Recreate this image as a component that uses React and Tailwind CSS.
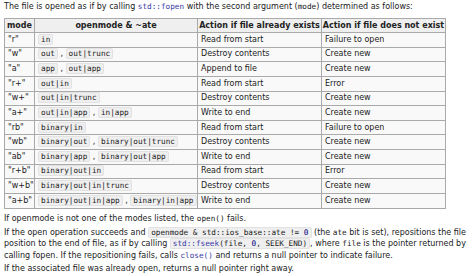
const rows = [
  ['"r"', [['in']], 'Read from start', 'Failure to open'],
  ['"w"', [['out'], ['out|trunc']], 'Destroy contents', 'Create new'],
  ['"a"', [['app'], ['out|app']], 'Append to file', 'Create new'],
  ['"r+"', [['out|in']], 'Read from start', 'Error'],
  ['"w+"', [['out|in|trunc']], 'Destroy contents', 'Create new'],
  ['"a+"', [['out|in|app'], ['in|app']], 'Write to end', 'Create new'],
  ['"rb"', [['binary|in']], 'Read from start', 'Failure to open'],
  ['"wb"', [['binary|out'], ['binary|out|trunc']], 'Destroy contents', 'Create new'],
  ['"ab"', [['binary|app'], ['binary|out|app']], 'Write to end', 'Create new'],
  ['"r+b"', [['binary|out|in']], 'Read from start', 'Error'],
  ['"w+b"', [['binary|out|in|trunc']], 'Destroy contents', 'Create new'],
  ['"a+b"', [['binary|out|in|app'], ['binary|in|app']], 'Write to end', 'Create new'],
];

const mono = "font-['DejaVu_Sans_Mono',monospace]";

function Chip({ children }) {
  return (
    <span className={`${mono} bg-[#efefef] border border-[#e2e2e2] rounded-[2px] px-[2px] text-[7.7px] leading-[9px] text-[#222]`}>
      {children}
    </span>
  );
}

function Modes({ list }) {
  return (
    <span>
      {list.map((m, i) => (
        <span key={i}>
          {i > 0 && <span>{' , '}</span>}
          <Chip>{m[0]}</Chip>
        </span>
      ))}
    </span>
  );
}

const cell = "bg-[#f9f9f9] h-[13.64px] px-[3px] flex items-center whitespace-nowrap overflow-hidden";
const head = "bg-[#efefef] h-[13px] px-[1px] flex items-center justify-center font-bold whitespace-nowrap overflow-hidden";

export default function App() {
  return (
    <div className="w-[474px] h-[276px] overflow-hidden bg-white px-[4px] pt-[1px] font-['DejaVu_Sans',sans-serif] text-[8px] leading-[11px] text-[#202122]">
      <p className="mb-[6px] whitespace-nowrap">
        The file is opened as if by calling <span className={`${mono} text-[#3b3ba8] text-[7.7px]`}>std::fopen</span> with the second argument (<span className={`${mono} text-[7.7px]`}>mode</span>) determined as follows:
      </p>
      <div className="w-[442px] grid grid-cols-[29px_162px_123px_123px] gap-[1px] p-[1px] bg-[#aaaaaa] text-[#222] leading-[10px]">
        <div className={head}>mode</div>
        <div className={head}>openmode &amp; ~ate</div>
        <div className={head}>Action if file already exists</div>
        <div className={head}>Action if file does not exist</div>
        {rows.map((r, i) => (
          <div key={i} className="contents">
            <div className={cell}>{r[0]}</div>
            <div className={cell}><Modes list={r[1]} /></div>
            <div className={cell}>{r[2]}</div>
            <div className={cell}>{r[3]}</div>
          </div>
        ))}
      </div>
      <p className="mt-[4px]">
        If openmode is not one of the modes listed, the <span className={`${mono} text-[7.7px]`}>open()</span> fails.
      </p>
      <p className="mt-[3px] leading-[11.5px]">
        If the open operation succeeds and <Chip>openmode &amp; std::ios_base::ate != <span className="text-[#000080]">0</span></Chip> (the <span className={`${mono} text-[7.7px]`}>ate</span> bit is set), repositions the file position to the end of file, as if by calling <Chip><span className="text-[#3b3ba8]">std::fseek</span>(file, <span className="text-[#000080]">0</span>, SEEK_END)</Chip>, where <span className={`${mono} text-[7.7px]`}>file</span> is the pointer returned by calling fopen. If the repositioning fails, calls <span className={`${mono} text-[7.7px] text-[#3b3ba8]`}>close()</span> and returns a null pointer to indicate failure.
      </p>
      <p className="mt-[2px]">
        If the associated file was already open, returns a null pointer right away.
      </p>
    </div>
  );
}
